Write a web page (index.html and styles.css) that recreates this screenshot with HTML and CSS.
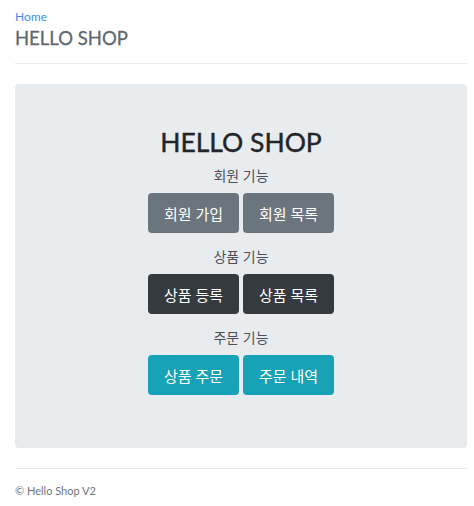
FILE: index.html
```html
<!DOCTYPE html>
<html lang="ko">
<head>
<meta charset="utf-8">
<title>HELLO SHOP</title>
<link rel="stylesheet" href="styles.css">
</head>
<body>
<div class="container">
  <header class="header">
    <a class="home" href="#">Home</a>
    <div class="brand">HELLO SHOP</div>
  </header>
  <main class="jumbotron">
    <h1 class="title">HELLO SHOP</h1>
    <p class="label">회원 기능</p>
    <div class="row">
      <a class="btn btn-secondary" href="#">회원 가입</a>
      <a class="btn btn-secondary" href="#">회원 목록</a>
    </div>
    <p class="label">상품 기능</p>
    <div class="row">
      <a class="btn btn-dark" href="#">상품 등록</a>
      <a class="btn btn-dark" href="#">상품 목록</a>
    </div>
    <p class="label">주문 기능</p>
    <div class="row">
      <a class="btn btn-info" href="#">상품 주문</a>
      <a class="btn btn-info" href="#">주문 내역</a>
    </div>
  </main>
  <footer class="footer">© Hello Shop V2</footer>
</div>
</body>
</html>
```
FILE: styles.css
```css
html, body {
  margin: 0;
  padding: 0;
  background: #fff;
}
body {
  font-family: Lato, "Noto Sans CJK KR", sans-serif;
  color: #212529;
}
.container {
  padding: 0 7px 0 15px;
}
.header {
  padding-top: 9px;
  padding-bottom: 12px;
  border-bottom: 1px solid #e9ecef;
  display: flex;
  flex-direction: column;
}
.home {
  font-size: 12px;
  line-height: 16px;
  color: #3d8ef0;
  text-decoration: none;
}
.brand {
  font-size: 18.5px;
  line-height: 26px;
  font-weight: 400;
  color: #5f6870;
  -webkit-text-stroke: 0.3px #5f6870;
}
.jumbotron {
  margin-top: 20px;
  background: #e9ecef;
  border-radius: 4px;
  padding: 41px 0 53px;
  display: flex;
  flex-direction: column;
  align-items: center;
}
.title {
  margin: 0 0 6px;
  font-size: 26.5px;
  line-height: 34px;
  font-weight: 400;
  color: #212529;
  -webkit-text-stroke: 0.4px #212529;
}
.label {
  margin: 0;
  font-size: 14px;
  line-height: 22px;
  color: #495057;
}
.row {
  display: flex;
  gap: 4px;
  margin: 6px 0 13px;
}
.row:last-child {
  margin-bottom: 0;
}
.btn {
  display: flex;
  align-items: center;
  justify-content: center;
  width: 91px;
  height: 40px;
  box-sizing: border-box;
  border-radius: 4px;
  color: #fff;
  text-decoration: none;
  font-size: 15px;
}
.btn-secondary { background: #6c757d; }
.btn-dark { background: #343a40; }
.btn-info { background: #17a2b8; }
.footer {
  margin-top: 20px;
  border-top: 1px solid #e9ecef;
  padding-top: 14px;
  font-size: 11px;
  line-height: 16px;
  color: #6c757d;
}
```
